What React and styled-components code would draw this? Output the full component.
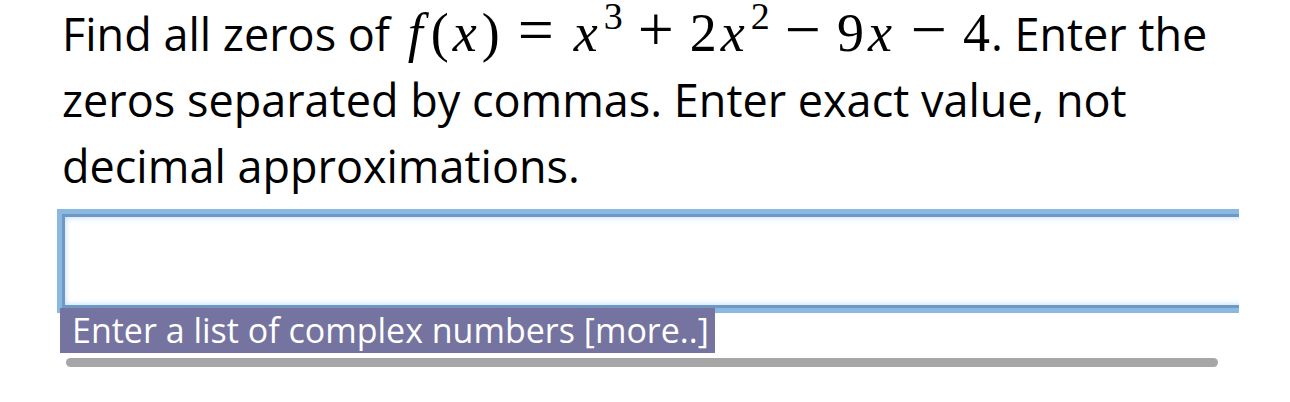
import React from "react";
import styled, { createGlobalStyle } from "styled-components";

const GlobalStyle = createGlobalStyle`
  html, body {
    margin: 0;
    padding: 0;
    background: #ffffff;
  }
  body {
    font-family: "Open Sans", "Noto Sans", sans-serif;
    color: #000000;
  }
`;

function App() {
  return (
    <Page>
      <GlobalStyle />
      <Question>
        Find all zeros of{" "}
        <Math>
          <Var $pad="0 7px 0 6px">f</Var>
          <Sym>(</Sym>
          <Var>x</Var>
          <Sym>)</Sym>
          <Rel>=</Rel>
          <Var>x</Var>
          <Sup>3</Sup>
          <Bin>+</Bin>
          <Sym>2</Sym>
          <Var>x</Var>
          <Sup>2</Sup>
          <Bin>−</Bin>
          <Sym>9</Sym>
          <Var>x</Var>
          <Bin>−</Bin>
          <Sym>4</Sym>
        </Math>
        . Enter the zeros separated by commas. Enter exact value, not decimal
        approximations.
      </Question>
      <ScrollArea>
        <AnswerBox type="text" />
        <Hint>Enter a list of complex numbers [more..]</Hint>
      </ScrollArea>
      <ScrollThumb />
    </Page>
  );
}

export default App;

const Page = styled.div`
  padding: 0;
`;

const Question = styled.div`
  margin-left: 62px;
  width: 1170px;
  font-size: 45px;
  line-height: 66px;
`;

const Math = styled.span`
  font-family: "Liberation Serif", "DejaVu Serif", serif;
  font-size: 54px;
  white-space: nowrap;
`;

const Var = styled.span`
  font-style: italic;
  padding: ${(p) => p.$pad || "0 4px 0 3px"};
`;

const Sym = styled.span`
  padding: 0 1px;
`;

const Sup = styled.sup`
  font-size: 38px;
  vertical-align: 22px;
  line-height: 0;
  padding-left: 2px;
`;

const Rel = styled.span`
  margin: 0 17px;
  font-size: 64px;
  line-height: 0;
`;

const Bin = styled.span`
  margin: 0 15px;
  font-size: 64px;
  line-height: 0;
`;

const ScrollArea = styled.div`
  margin-top: 10px;
  margin-left: 57px;
  width: 1182px;
  padding: 5px 0 0 5px;
  box-sizing: border-box;
  overflow: hidden;
`;

const AnswerBox = styled.input`
  display: block;
  box-sizing: border-box;
  width: 1300px;
  height: 94px;
  margin: 0;
  border: 3px solid #6f99c4;
  background: #ffffff;
  box-shadow: 0 0 0 5px #89b9e0, inset 0 0 6px #b6d6f6;
  outline: none;
`;

const Hint = styled.div`
  display: inline-block;
  margin-left: -2px;
  height: 45px;
  padding: 0 6px 0 12px;
  background: #7573a0;
  color: #ffffff;
  font-size: 34px;
  line-height: 45px;
  white-space: nowrap;
`;

const ScrollThumb = styled.div`
  margin: 5px 0 0 66px;
  width: 1152px;
  height: 9px;
  border-radius: 5px;
  background: #a6a6a6;
`;
